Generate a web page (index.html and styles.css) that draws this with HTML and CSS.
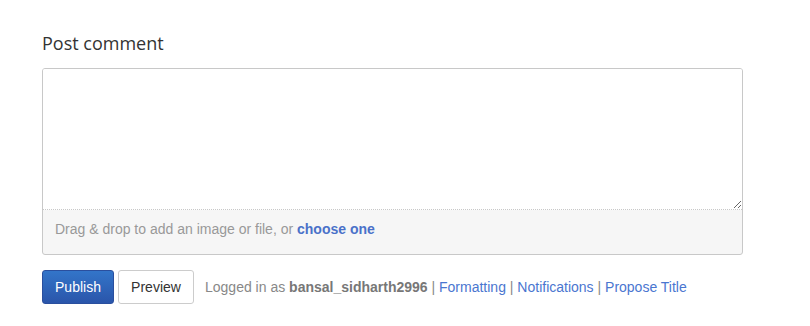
FILE: index.html
```html
<!DOCTYPE html>
<html>
<head>
<meta charset="utf-8">
<link rel="stylesheet" href="styles.css">
</head>
<body>
<div class="comment">
  <h2 class="title">Post comment</h2>
  <div class="editor">
    <textarea class="input"></textarea>
    <div class="drop">Drag &amp; drop to add an image or file, or <a href="#" class="choose">choose one</a></div>
  </div>
  <div class="actions">
    <button class="btn btn-primary">Publish</button>
    <button class="btn btn-default">Preview</button>
    <div class="meta">Logged in as <b>bansal_sidharth2996</b> <span class="sep">|</span> <a href="#">Formatting</a> <span class="sep">|</span> <a href="#">Notifications</a> <span class="sep">|</span> <a href="#">Propose Title</a></div>
  </div>
</div>
</body>
</html>
```

FILE: styles.css
```css
html, body {
  margin: 0;
  padding: 0;
  background: #fff;
}
body {
  font-family: "Liberation Sans", Arial, sans-serif;
  font-size: 14px;
  color: #333;
}
.comment {
  width: 701px;
  padding: 31px 0 0 42px;
}
.title {
  margin: 0 0 13px;
  font-family: "Open Sans", "Noto Sans", sans-serif;
  font-weight: 400;
  font-size: 18px;
  line-height: 24px;
  color: #333;
}
.editor {
  border: 1px solid #c8c8c8;
  border-radius: 3px;
  background: #f6f6f6;
  overflow: hidden;
}
.input {
  display: block;
  width: 100%;
  height: 141px;
  box-sizing: border-box;
  margin: 0;
  padding: 8px 12px;
  border: 0;
  border-bottom: 1px dotted #c8c8c8;
  background: #fff;
  resize: vertical;
  font-family: inherit;
  font-size: 14px;
  outline: none;
}
.drop {
  height: 44px;
  line-height: 39px;
  padding: 0 12px;
  color: #999;
  font-size: 14px;
}
.choose {
  color: #4a71c9;
  font-weight: 700;
  text-decoration: none;
}
.actions {
  display: flex;
  align-items: center;
  margin-top: 15px;
}
.btn {
  height: 34px;
  box-sizing: border-box;
  padding: 0 12px;
  border-radius: 3px;
  font-family: "Liberation Sans", Arial, sans-serif;
  font-size: 14px;
  cursor: pointer;
}
.btn-primary {
  width: 72px;
  color: #fff;
  border: 1px solid #2a4f9e;
  background: linear-gradient(#3375c9, #2a55aa);
}
.btn-default {
  width: 76px;
  margin-left: 4px;
  color: #333;
  border: 1px solid #ccc;
  background: #fff;
}
.meta {
  margin-left: 11px;
  color: #888;
}
.meta b {
  color: #777;
}
.meta a {
  color: #4a76d0;
  text-decoration: none;
}
.sep {
  color: #888;
}
```
